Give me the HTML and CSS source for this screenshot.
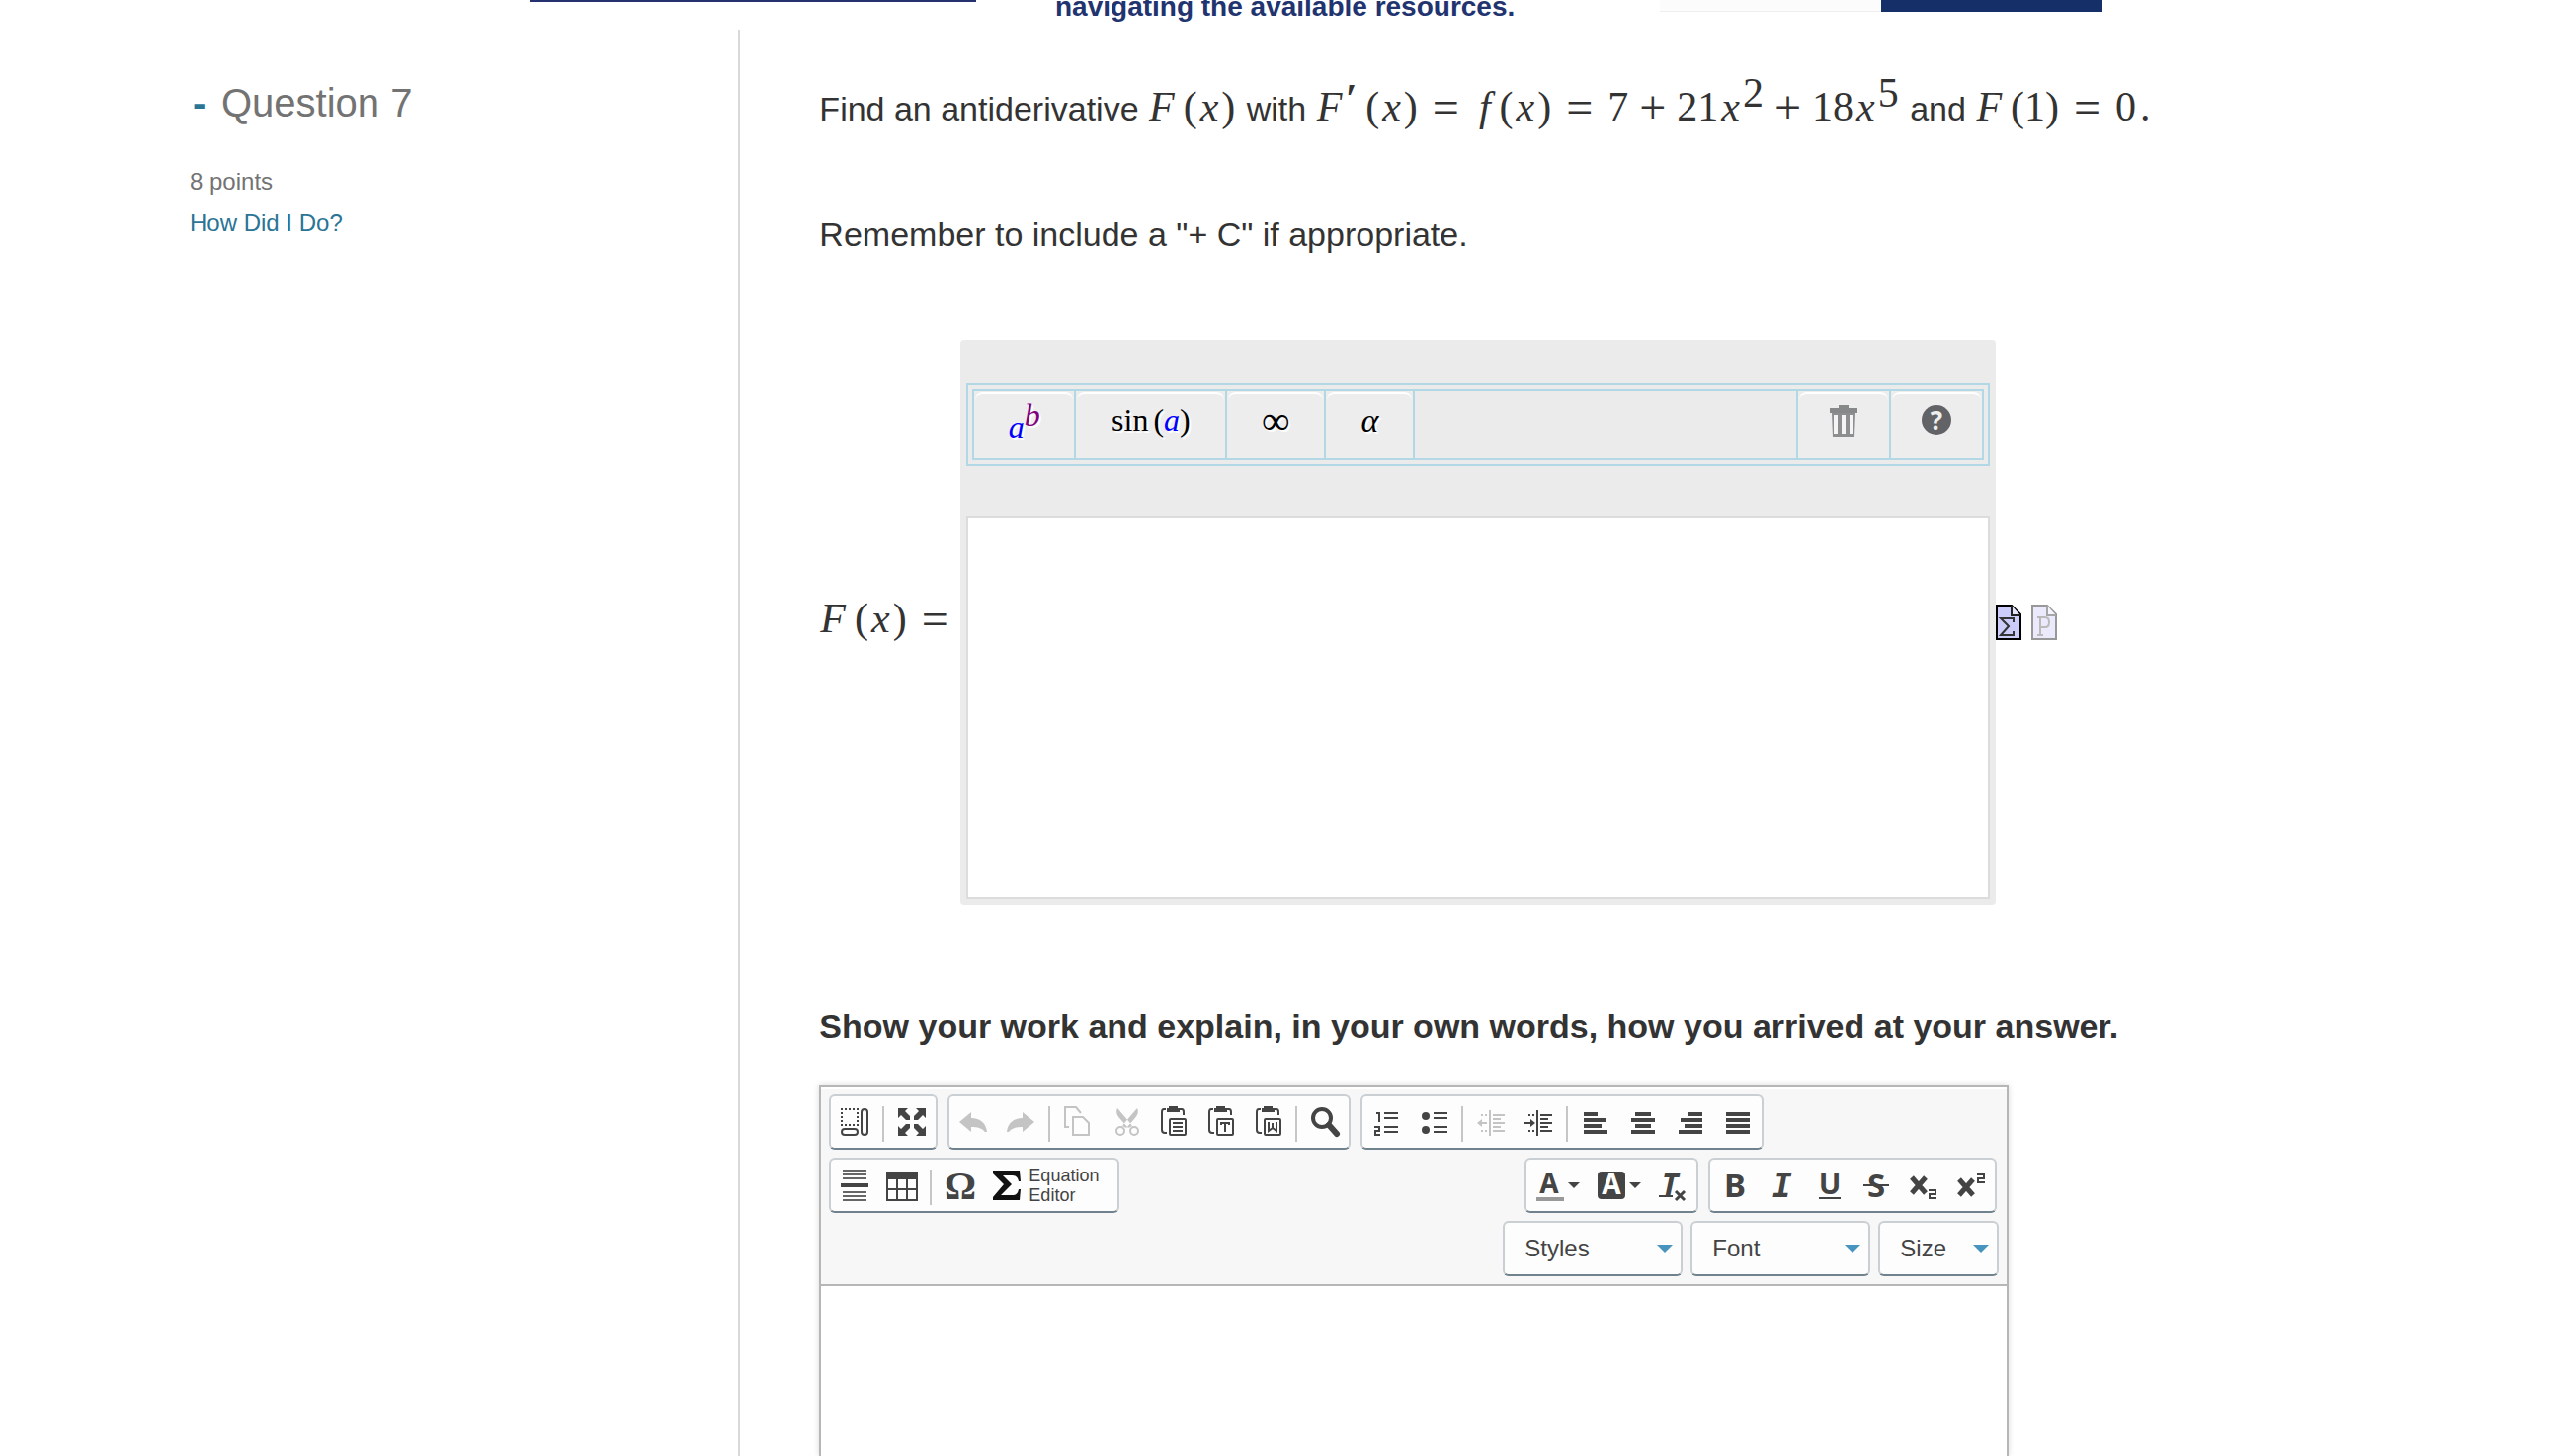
FILE: index.html
```
<!DOCTYPE html>
<html lang="en">
<head>
<meta charset="UTF-8">
<meta name="viewport" content="width=device-width, initial-scale=1.0">
<title>Question 7</title>
<link rel="stylesheet" href="styles.css">
</head>
<body>
<header class="banner">
    <div class="banner-line"></div>
    <p class="banner-text">navigating the available resources.</p>
    <div class="banner-boxes">
        <div class="box-light"></div>
        <div class="box-navy"></div>
    </div>
</header>

<div class="page">
    <aside class="sidebar">
        <h2 class="question-title"><a href="#question" class="toggle">-</a>Question 7</h2>
        <p class="points">8 points</p>
        <a href="#how" class="how-link">How Did I Do?</a>
    </aside>

    <main class="question" id="question">
        <p class="prompt">Find an antiderivative <span class="math"><i class="fn">F</i>(<i class="var">x</i>)</span> with <span class="math"><i class="fn">F<sup class="prime">′</sup></i>(<i class="var">x</i>)<span class="rel">=</span><i class="fn low">f</i>(<i class="var">x</i>)<span class="rel">=</span>7<span class="bin">+</span>21<i class="var">x</i><sup>2</sup><span class="bin">+</span>18<i class="var">x</i><sup>5</sup></span> and <span class="math"><i class="fn">F</i>(<span class="num">1</span>)<span class="rel">=</span>0</span><span class="math stop">.</span></p>
        <p class="prompt">Remember to include a "+ C" if appropriate.</p>

        <div class="answer">
            <label class="math answer-label" for="answer"><i class="fn">F</i>(<i class="var">x</i>)<span class="rel">=</span></label>
            <div class="math-editor">
                <div class="math-frame">
                    <div class="math-bar">
                        <button class="cell cell-power" aria-label="Powers"><i class="blue">a</i><sup class="purple">b</sup></button>
                        <button class="cell cell-func">sin<span class="paren">(</span><i class="blue">a</i>)</button>
                        <button class="cell cell-inf">∞</button>
                        <button class="cell cell-alpha"><i>α</i></button>
                        <span class="cell-space"></span>
                        <button class="cell cell-icon" aria-label="Clear">
                            <svg width="32" height="34" viewBox="0 0 32 34">
                                <path d="M11 2h10v3h9v5H2V5h9z" fill="#86888a"/>
                                <path d="M4 10h24l-1 24H5z" fill="#8c8e90"/>
                                <path d="M8 12v19M16 12v19M24 12v19" stroke="#f4f4f4" stroke-width="4"/>
                            </svg>
                        </button>
                        <button class="cell cell-icon" aria-label="Help">
                            <svg width="32" height="34" viewBox="0 0 32 34">
                                <circle cx="16" cy="17" r="15" fill="#626366"/>
                                <text x="16" y="27" text-anchor="middle" class="help-mark">?</text>
                            </svg>
                        </button>
                    </div>
                </div>
                <textarea id="answer" class="math-input"></textarea>
            </div>
            <div class="modes">
                <button class="mode" aria-label="Equation mode">
                    <svg width="26" height="36" viewBox="0 0 26 36">
                        <path d="M1 1h15l9 9v25H1z" fill="#ccccfa" stroke="#000" stroke-width="2"/>
                        <path d="M16 1v10h9" fill="#e4e4fb" stroke="#222" stroke-width="2"/>
                        <path d="M18 18v-4H5l8 8-8 9h13v-4" fill="none" stroke="#333" stroke-width="2"/>
                    </svg>
                </button>
                <button class="mode mode-off" aria-label="Text mode">
                    <svg width="26" height="36" viewBox="0 0 26 36">
                        <path d="M1 1h15l9 9v25H1z" fill="#ccccfa" stroke="#000" stroke-width="2"/>
                        <path d="M16 1v10h9" fill="#e4e4fb" stroke="#222" stroke-width="2"/>
                        <path d="M6 13h8q4 0 4 5t-4 5h-5M9 13v18M6 31h6" fill="none" stroke="#555" stroke-width="2"/>
                    </svg>
                </button>
            </div>
        </div>

        <p class="prompt prompt-work"><b>Show your work and explain, in your own words, how you arrived at your answer.</b></p>

        <div class="editor">
            <div class="toolbar">
                <div class="row">
                    <div class="group">
                        <button class="tool" aria-label="Show blocks">
                            <svg viewBox="0 0 32 32"><path d="M2 3h18M2 19h18" stroke="#444" stroke-width="2" stroke-dasharray="2 2"/><path d="M3 6v14M19 6v14" stroke="#444" stroke-width="2" stroke-dasharray="2 2"/><rect x="3" y="23" width="16" height="6" rx="3" fill="none" stroke="#444" stroke-width="2"/><rect x="23" y="3" width="6" height="26" rx="3" fill="none" stroke="#444" stroke-width="2"/></svg>
                        </button>
                        <span class="sep"></span>
                        <button class="tool" aria-label="Maximize">
                            <svg viewBox="0 0 32 32"><path d="M2 2h10l-3 3 5 5v4h-4l-5-5-3 3zM30 2v10l-3-3-5 5h-4v-4l5-5-3-3zM2 30V20l3 3 5-5h4v4l-5 5 3 3zM30 30H20l3-3-5-5v-4h4l5 5 3-3z" fill="#444"/></svg>
                        </button>
                    </div>
                    <div class="group">
                        <button class="tool" aria-label="Undo" disabled>
                            <svg viewBox="0 0 32 32"><path d="M2 16L14 6v6c9 0 15 5 16 14h-2c-3-4-8-5-14-5v5z" fill="#c4c4c4"/></svg>
                        </button>
                        <button class="tool" aria-label="Redo" disabled>
                            <svg viewBox="0 0 32 32"><path d="M30 16L18 6v6C9 12 3 17 2 26h2c3-4 8-5 14-5v5z" fill="#c4c4c4"/></svg>
                        </button>
                        <span class="sep"></span>
                        <button class="tool" aria-label="Copy" disabled>
                            <svg viewBox="0 0 32 32"><path d="M7 21H3V1h11l5 6M11 11h10l6 6v12H11z" fill="none" stroke="#c4c4c4" stroke-width="2"/></svg>
                        </button>
                        <button class="tool" aria-label="Cut" disabled>
                            <svg viewBox="0 0 32 32"><path d="M8 2c-2 4 0 8 3 11l8 9 4-2-3-4zM28 2c2 4 0 8-3 11l-8 9-4-2 3-4z" fill="#c4c4c4"/><circle cx="11" cy="25" r="4" fill="none" stroke="#c4c4c4" stroke-width="2"/><circle cx="25" cy="25" r="4" fill="none" stroke="#c4c4c4" stroke-width="2"/></svg>
                        </button>
                        <button class="tool" aria-label="Paste">
                            <svg viewBox="0 0 32 32"><path d="M9 3H7q-2 0-2 3v18q0 3 3 3h2M23 3h2q2 0 2 3v3" fill="none" stroke="#444" stroke-width="2"/><path d="M12 0h9v2h2v4H10V2h2z" fill="#444"/><rect x="13" y="13" width="16" height="16" rx="1" fill="none" stroke="#444" stroke-width="2"/><path d="M16 17h10M16 21h10M16 25h10" stroke="#444" stroke-width="2"/></svg>
                        </button>
                        <button class="tool" aria-label="Paste as plain text">
                            <svg viewBox="0 0 32 32"><path d="M9 3H7q-2 0-2 3v18q0 3 3 3h2M23 3h2q2 0 2 3v3" fill="none" stroke="#444" stroke-width="2"/><path d="M12 0h9v2h2v4H10V2h2z" fill="#444"/><rect x="13" y="13" width="16" height="16" rx="1" fill="none" stroke="#444" stroke-width="2"/><path d="M17 19v-2h8v2M21 17v9" fill="none" stroke="#444" stroke-width="2"/></svg>
                        </button>
                        <button class="tool" aria-label="Paste from Word">
                            <svg viewBox="0 0 32 32"><path d="M9 3H7q-2 0-2 3v18q0 3 3 3h2M23 3h2q2 0 2 3v3" fill="none" stroke="#444" stroke-width="2"/><path d="M12 0h9v2h2v4H10V2h2z" fill="#444"/><rect x="13" y="13" width="16" height="16" rx="1" fill="none" stroke="#444" stroke-width="2"/><path d="M17 16v9l4-3 4 3v-9M21 17v5" fill="none" stroke="#444" stroke-width="2"/></svg>
                        </button>
                        <span class="sep"></span>
                        <button class="tool" aria-label="Find">
                            <svg viewBox="0 0 32 32"><circle cx="13" cy="12" r="9" fill="none" stroke="#444" stroke-width="4"/><path d="M20 19l8 9" stroke="#444" stroke-width="6" stroke-linecap="round"/></svg>
                        </button>
                    </div>
                    <div class="group">
                        <button class="tool" aria-label="Numbered list">
                            <svg viewBox="0 0 32 32"><path d="M14 7h14M14 12h14M14 21h14M14 26h14" stroke="#444" stroke-width="2"/><path d="M6 7h3v9M4 21h5v4H5v4h5" fill="none" stroke="#444" stroke-width="2"/></svg>
                        </button>
                        <button class="tool" aria-label="Bulleted list">
                            <svg viewBox="0 0 32 32"><path d="M16 7h14M16 12h14M16 21h14M16 26h14" stroke="#444" stroke-width="2"/><circle cx="8" cy="10" r="4" fill="#444"/><circle cx="8" cy="24" r="4" fill="#444"/></svg>
                        </button>
                        <span class="sep"></span>
                        <button class="tool" aria-label="Decrease indent" disabled>
                            <svg viewBox="0 0 32 32"><path d="M15 4v26M18 9h12M18 13h8M18 17h12M18 21h8M18 25h12" stroke="#c4c4c4" stroke-width="2"/><path d="M6 9h7M6 25h7" stroke="#c4c4c4" stroke-width="2" stroke-dasharray="2 2"/><path d="M2 17l5-4v3h5v2H7v3z" fill="#c4c4c4"/></svg>
                        </button>
                        <button class="tool" aria-label="Increase indent">
                            <svg viewBox="0 0 32 32"><path d="M15 4v26M18 9h12M18 13h8M18 17h12M18 21h8M18 25h12" stroke="#444" stroke-width="2"/><path d="M6 9h7M6 25h7" stroke="#444" stroke-width="2" stroke-dasharray="2 2"/><path d="M13 17l-5-4v3H2v2h6v3z" fill="#444"/></svg>
                        </button>
                        <span class="sep"></span>
                        <button class="tool" aria-label="Align left">
                            <svg viewBox="0 0 32 32"><path d="M4 8h14M4 14h22M4 20h18M4 26h24" stroke="#444" stroke-width="4"/></svg>
                        </button>
                        <button class="tool" aria-label="Center">
                            <svg viewBox="0 0 32 32"><path d="M8 8h16M4 14h24M8 20h16M4 26h24" stroke="#444" stroke-width="4"/></svg>
                        </button>
                        <button class="tool" aria-label="Align right">
                            <svg viewBox="0 0 32 32"><path d="M14 8h14M6 14h22M10 20h18M4 26h24" stroke="#444" stroke-width="4"/></svg>
                        </button>
                        <button class="tool" aria-label="Justify">
                            <svg viewBox="0 0 32 32"><path d="M4 8h24M4 14h24M4 20h24M4 26h24" stroke="#444" stroke-width="4"/></svg>
                        </button>
                    </div>
                </div>

                <div class="row">
                    <div class="group">
                        <button class="tool" aria-label="Horizontal line">
                            <svg viewBox="0 0 32 32"><path d="M4 1h24M4 5h24M4 9h24M4 23h24M4 27h24M4 31h24" stroke="#666" stroke-width="2"/><path d="M2 16h28" stroke="#444" stroke-width="4"/></svg>
                        </button>
                        <button class="tool" aria-label="Table">
                            <svg viewBox="0 0 32 32"><path d="M0 2h32v8H0z" fill="#444"/><path d="M1 9v22h30V9M11 9v22M21 9v22M0 20h32" fill="none" stroke="#444" stroke-width="2"/></svg>
                        </button>
                        <span class="sep"></span>
                        <button class="tool" aria-label="Special character">
                            <svg viewBox="0 0 32 32"><text x="17" y="30" text-anchor="middle" class="omega">Ω</text></svg>
                        </button>
                        <button class="tool tool-eq">
                            <svg viewBox="0 0 32 32"><path d="M2 1h27l1 11h-2c-1-5-3-6-8-6H12l9 9-11 11h11c5 0 6-2 7-6h2l-1 11H2v-3l11-13L2 4z" fill="#111"/></svg>
                            <span>Equation<br>Editor</span>
                        </button>
                    </div>
                    <div class="group push">
                        <button class="tool tool-drop" aria-label="Text color">
                            <svg viewBox="0 0 32 32"><text x="15" y="24" text-anchor="middle" class="glyph small">A</text><path d="M2 30h28" stroke="#999" stroke-width="4"/></svg>
                            <span class="caret"></span>
                        </button>
                        <button class="tool tool-drop" aria-label="Background color">
                            <svg viewBox="0 0 32 32"><rect x="2" y="2" width="28" height="28" rx="4" fill="#444"/><text x="16" y="25" text-anchor="middle" class="glyph small light">A</text></svg>
                            <span class="caret"></span>
                        </button>
                        <button class="tool" aria-label="Remove format">
                            <svg viewBox="0 0 32 32"><text x="13" y="26" text-anchor="middle" class="glyph slant">T</text><path d="M2 27h14" stroke="#444" stroke-width="2"/><path d="M19 22l9 9M28 22l-9 9" stroke="#444" stroke-width="3"/></svg>
                        </button>
                    </div>
                    <div class="group">
                        <button class="tool" aria-label="Bold">
                            <svg viewBox="0 0 32 32"><text x="17" y="28" text-anchor="middle" class="glyph">B</text></svg>
                        </button>
                        <button class="tool" aria-label="Italic">
                            <svg viewBox="0 0 32 32"><text x="17" y="28" text-anchor="middle" class="glyph slab">I</text></svg>
                        </button>
                        <button class="tool" aria-label="Underline">
                            <svg viewBox="0 0 32 32"><text x="17" y="25" text-anchor="middle" class="glyph mid">U</text><path d="M6 29h22" stroke="#444" stroke-width="2"/></svg>
                        </button>
                        <button class="tool" aria-label="Strikethrough">
                            <svg viewBox="0 0 32 32"><text x="16" y="28" text-anchor="middle" class="glyph">S</text><path d="M3 16h26" stroke="#444" stroke-width="2"/></svg>
                        </button>
                        <button class="tool" aria-label="Subscript">
                            <svg viewBox="0 0 32 32"><path d="M4 8l14 16M18 8L4 24" stroke="#444" stroke-width="5"/><path d="M21 21h7v4h-6v4h7" fill="none" stroke="#444" stroke-width="2"/></svg>
                        </button>
                        <button class="tool" aria-label="Superscript">
                            <svg viewBox="0 0 32 32"><path d="M4 10l14 16M18 10L4 26" stroke="#444" stroke-width="5"/><path d="M22 5h7v4h-6v4h7" fill="none" stroke="#444" stroke-width="2"/></svg>
                        </button>
                    </div>
                </div>

                <div class="row row-combos">
                    <span class="combo"><select aria-label="Styles"><option>Styles</option></select></span>
                    <span class="combo"><select aria-label="Font"><option>Font</option></select></span>
                    <span class="combo combo-size"><select aria-label="Size"><option>Size</option></select></span>
                </div>
            </div>
            <textarea class="editor-body" aria-label="Your work"></textarea>
        </div>
    </main>
</div>
</body>
</html>
```
FILE: styles.css
```
* {
    box-sizing: border-box;
}
body {
    font-family: "Liberation Sans", Arial, sans-serif;
    margin: 0;
    min-height: 100vh;
    display: flex;
    flex-direction: column;
    background-color: #ffffff;
    color: #333333;
}
p, h2 {
    margin: 0;
}
button {
    border: none;
    padding: 0;
    margin: 0;
    background: none;
    color: inherit;
    font-family: inherit;
    cursor: pointer;
}
svg {
    overflow: visible;
}
textarea {
    display: block;
    width: 100%;
    resize: none;
    outline: none;
    background-color: #ffffff;
}

/* Banner */
.banner {
    display: flex;
    align-items: flex-end;
    gap: 80px;
    height: 23px;
    margin-bottom: 7px;
    padding: 0 456px 0 536px;
    overflow: hidden;
}
.banner-line {
    align-self: flex-start;
    width: 452px;
    height: 2px;
    background-color: #263270;
}
.banner-text {
    font-size: 28px;
    line-height: 32px;
    font-weight: bold;
    color: #22346f;
    white-space: nowrap;
}
.banner-boxes {
    align-self: flex-start;
    display: flex;
    margin-left: auto;
}
.banner-boxes div {
    width: 224px;
    height: 12px;
}
.box-light {
    background-color: #fcfcfc;
    border-bottom: 1px solid #eeeeee;
}
.box-navy {
    background-color: #152f69;
}

/* Columns */
.page {
    flex: 1;
    display: flex;
}
.sidebar {
    flex: 0 0 29%;
    padding: 50px 24px 0 192px;
    border-right: 2px solid #d9d9d9;
    color: #737373;
    font-size: 24px;
    line-height: 42px;
}
.question-title {
    margin-bottom: 35px;
    font-size: 40px;
    line-height: 48px;
    font-weight: normal;
}
.toggle {
    display: inline-block;
    width: 32px;
    padding-left: 3px;
    color: #2a7495;
    font-weight: bold;
    text-decoration: none;
}
.how-link {
    color: #2a7495;
    text-decoration: none;
}
.question {
    flex: 1;
    display: flex;
    flex-direction: column;
    padding: 56px 80px 0;
}
.prompt {
    margin-bottom: 79px;
    font-size: 34px;
    line-height: 48px;
    white-space: nowrap;
}

/* Math text */
.math {
    font-family: "Liberation Serif", "Times New Roman", serif;
    font-size: 42px;
    line-height: 0;
    padding: 0 2px 0 1px;
    white-space: nowrap;
}
.math sup {
    font-size: 42px;
    line-height: 0;
    vertical-align: 14px;
}
.math .prime {
    margin-left: 3px;
    vertical-align: 8px;
    font-weight: bold;
}
.fn {
    margin-right: 9px;
}
.low {
    margin-left: 5px;
}
.var {
    margin: 0 3px;
}
.rel {
    margin: 0 15px;
    font-size: 48px;
    vertical-align: -3px;
}
.bin {
    margin: 0 11px;
    font-size: 48px;
    vertical-align: -3px;
}
.stop {
    padding-left: 2px;
}

/* Answer box */
.answer {
    display: flex;
    align-items: center;
    margin-bottom: 99px;
    margin-top: 4px;
}
.answer-label {
    flex: 0 0 143px;
    padding-bottom: 8px;
    line-height: 48px;
}
.answer-label .rel {
    margin-right: 0;
    line-height: 0;
}
.math-editor {
    flex: 0 1 1048px;
    padding: 44px 6px 6px;
    border-radius: 4px;
    background-color: #ebebeb;
}
.math-frame {
    padding: 4px;
    margin-bottom: 50px;
    border: 2px solid #b2d8e5;
}
.math-bar {
    display: flex;
    height: 72px;
    border: 2px solid #b2d8e5;
}
.cell {
    position: relative;
    border-right: 2px solid #b2d8e5;
    padding: 0 0 10px;
    background-color: #ededed;
    color: #000000;
    font-family: "Liberation Serif", "Times New Roman", serif;
    font-size: 32px;
    line-height: 34px;
    text-shadow: 2px 2px 1px #ffffff;
}
/* light edge along the top of each button */
.cell::before {
    content: "";
    position: absolute;
    top: 1px;
    left: 1px;
    right: 1px;
    height: 10px;
    border-top: 2px solid #ffffff;
    border-radius: 8px 8px 0 0;
}
.cell:last-child {
    border-right: none;
}
.cell-power {
    width: 103px;
    padding: 4px 0 0;
}
.cell-power sup {
    font-size: 32px;
    line-height: 0;
    vertical-align: 12px;
    font-style: italic;
}
.cell-func {
    width: 153px;
}
.cell-inf {
    width: 100px;
    padding-bottom: 8px;
    font-size: 40px;
}
.cell-alpha {
    width: 90px;
    padding-bottom: 8px;
    font-size: 34px;
}
.cell-space {
    flex: 1;
    border-right: 2px solid #b2d8e5;
}
.cell-icon {
    width: 94px;
}
.cell-icon:last-child {
    width: 92px;
}
.cell-icon svg {
    display: block;
    margin: 0 auto;
}
.paren {
    margin-left: 5px;
}
.blue {
    color: #0000ff;
}
.purple {
    color: #800080;
}
.help-mark {
    font-family: "Open Sans", sans-serif;
    font-size: 26px;
    font-weight: bold;
    fill: #eeeeee;
    text-shadow: none;
}
.math-input {
    height: 388px;
    border: 2px solid #dcdcdc;
    font-family: "Liberation Serif", serif;
    font-size: 30px;
}
.modes {
    display: flex;
    gap: 10px;
}
.mode svg {
    display: block;
}
.mode-off {
    opacity: 0.4;
}

/* Rich text editor */
.prompt-work {
    margin-bottom: 35px;
}
.editor {
    flex: 1;
    display: flex;
    flex-direction: column;
    width: 100%;
    max-width: 1204px;
    border: 2px solid #b6b6b6;
    border-bottom: none;
    box-shadow: 0 0 6px rgba(0, 0, 0, 0.15);
}
.toolbar {
    display: flex;
    flex-direction: column;
    gap: 8px;
    padding: 8px;
    border-bottom: 2px solid #b6b6b6;
    box-shadow: inset 0 2px 0 #ffffff;
    background-color: #f7f7f7;
}
.row {
    display: flex;
    gap: 10px;
    padding-right: 2px;
}
.row-combos {
    justify-content: flex-end;
    gap: 8px;
    padding-right: 0;
}
.push {
    margin-left: auto;
}
.group, .combo select {
    height: 56px;
    border: 2px solid #c9cfd3;
    border-bottom-color: #6f828d;
    border-radius: 6px;
    background-color: #fdfdfd;
    color: #444444;
}
.group {
    display: flex;
}
.tool {
    display: flex;
    align-items: center;
    padding: 0 8px;
}
.tool svg {
    display: block;
    flex: none;
    width: 32px;
    height: 32px;
}
.sep {
    width: 2px;
    height: 36px;
    margin: 10px 4px 0;
    background-color: #c6c6c6;
}
.tool-eq {
    width: 136px;
    gap: 6px;
    font-size: 18px;
    line-height: 20px;
    text-align: left;
}
.tool-drop {
    gap: 2px;
}
.caret {
    border: 6px solid transparent;
    border-top-color: #444444;
    border-bottom: none;
}
.glyph {
    font-family: "Noto Sans", sans-serif;
    font-size: 33px;
    font-weight: bold;
    fill: #444444;
}
.mid {
    font-size: 30px;
}
.small {
    font-size: 28px;
}
.light {
    fill: #ffffff;
}
.slant {
    font-size: 31px;
    font-style: italic;
}
.slab {
    font-family: "DejaVu Sans Mono", monospace;
    font-style: italic;
}
.omega {
    font-family: "Liberation Serif", serif;
    font-size: 40px;
    font-weight: bold;
    fill: #444444;
}
.combo {
    position: relative;
    width: 182px;
}
.combo-size {
    width: 122px;
}
.combo select {
    appearance: none;
    width: 100%;
    padding: 0 20px 2px;
    font-family: inherit;
    font-size: 24px;
}
.combo::after {
    content: "";
    position: absolute;
    top: 24px;
    right: 10px;
    border: 8px solid transparent;
    border-top-color: #4795be;
    border-bottom: none;
    pointer-events: none;
}
.editor-body {
    flex: 1;
    border: none;
    padding: 20px;
    font-size: 24px;
}
```
